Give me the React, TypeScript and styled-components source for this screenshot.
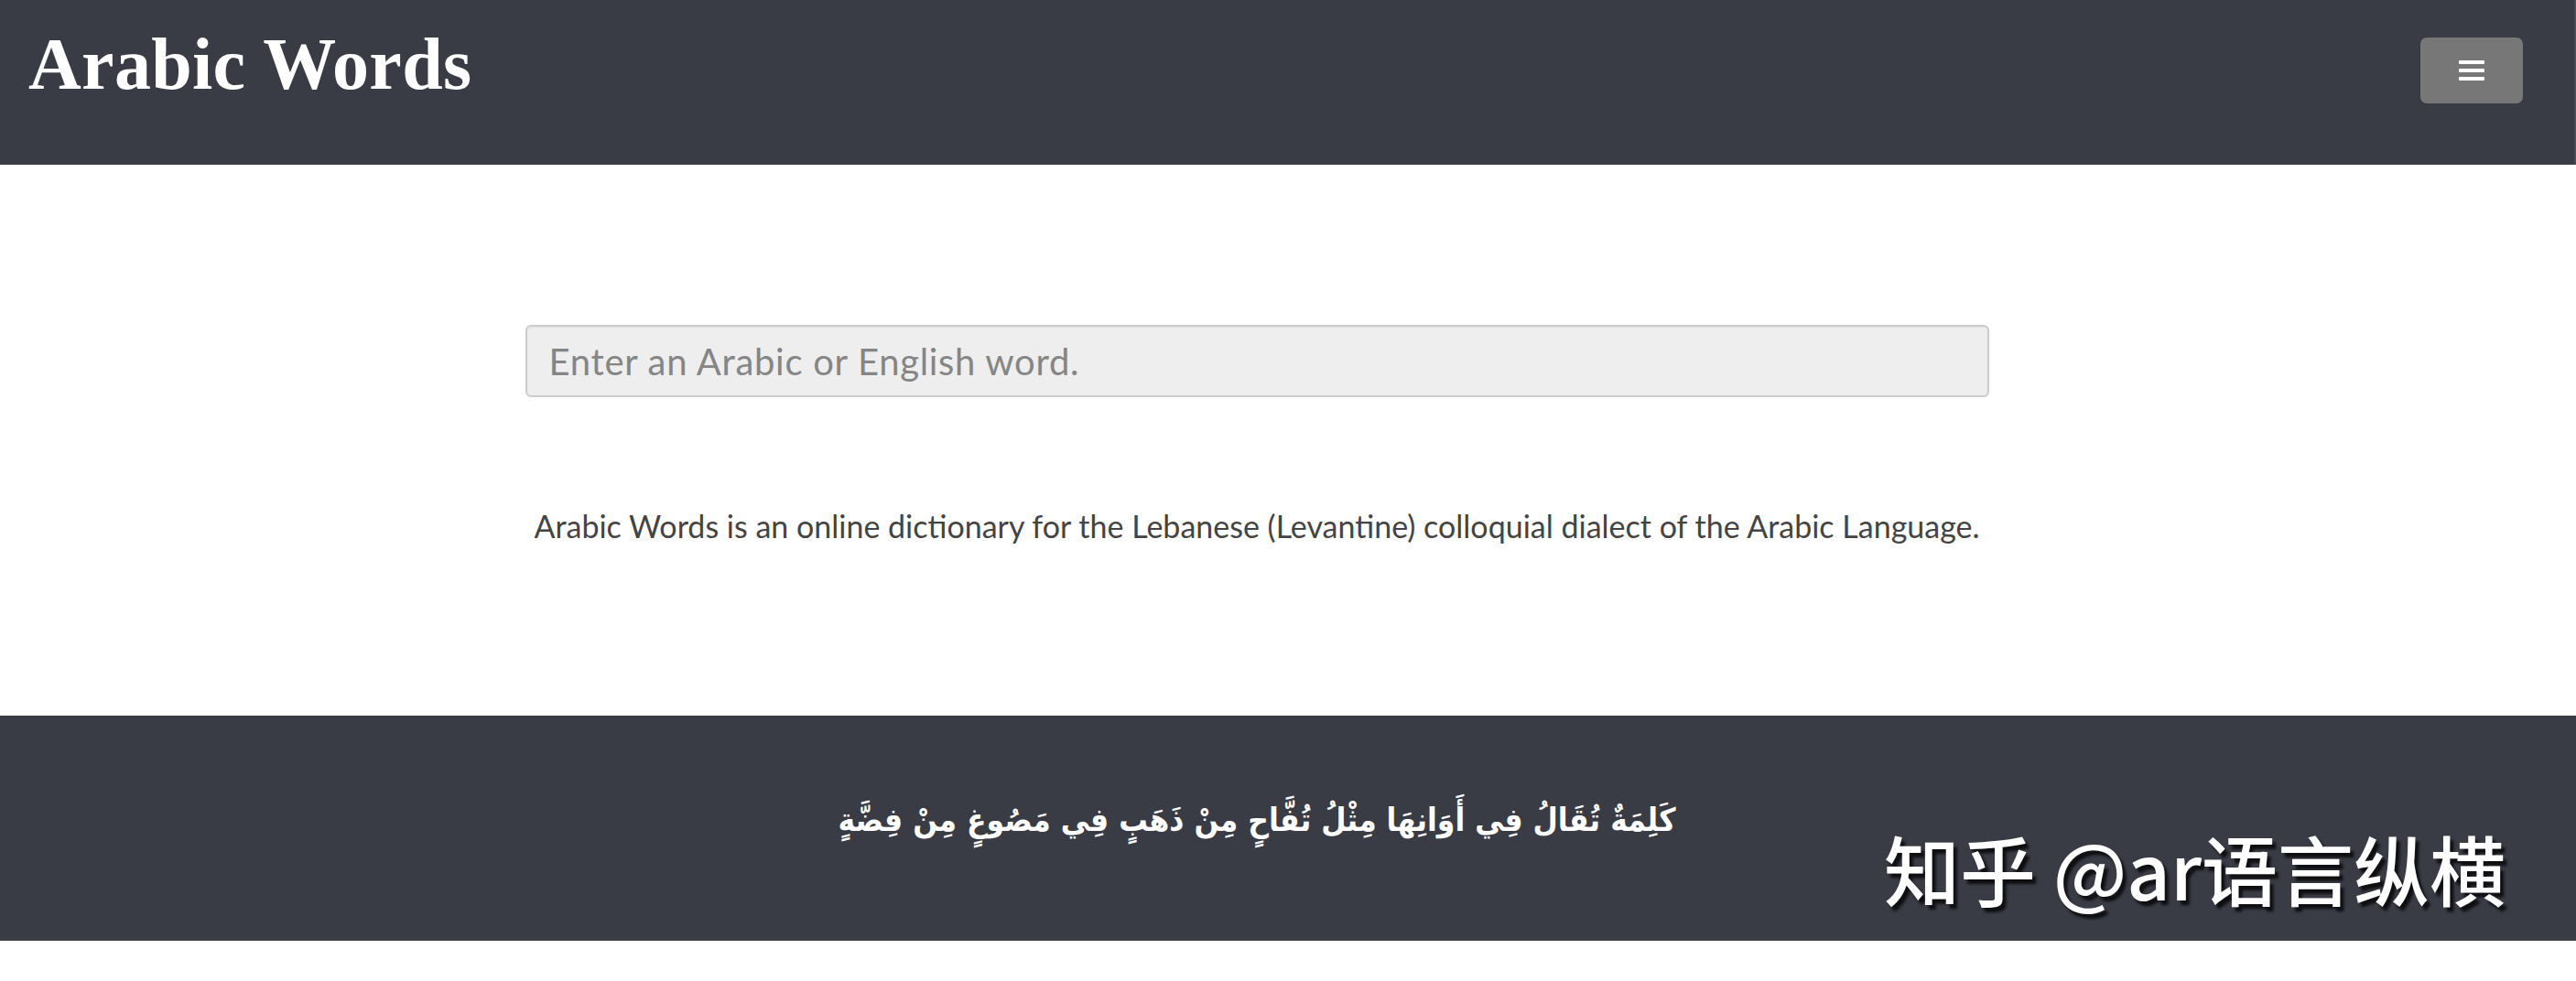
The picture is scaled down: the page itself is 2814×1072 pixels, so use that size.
import React from 'react';
import styled, { createGlobalStyle } from 'styled-components';

const GlobalStyle = createGlobalStyle`
  html, body {
    margin: 0;
    padding: 0;
    background: #ffffff;
  }
  body {
    font-family: Lato, "Open Sans", sans-serif;
  }
`;

const Page = styled.div`
  width: 2814px;
`;

const Header = styled.header`
  height: 180px;
  box-sizing: border-box;
  padding: 0 56px 0 31px;
  background: #393b45;
  border-right: 2px solid #4a4c55;
  display: flex;
  align-items: flex-start;
  justify-content: space-between;
`;

const Brand = styled.a`
  padding-top: 30px;
  font-family: "Liberation Serif", "DejaVu Serif", serif;
  font-weight: 700;
  font-size: 80px;
  line-height: 80px;
  color: #ffffff;
  text-decoration: none;
  letter-spacing: 0.3px;
`;

const MenuButton = styled.button`
  margin-top: 41px;
  width: 112px;
  height: 72px;
  border: 0;
  border-radius: 7px;
  background: #777777;
  display: flex;
  flex-direction: column;
  align-items: center;
  justify-content: center;
  gap: 5px;
  cursor: pointer;
`;

const Bar = styled.span`
  display: block;
  width: 28px;
  height: 4px;
  background: #ffffff;
  border-radius: 1px;
`;

const Main = styled.main`
  height: 602px;
  background: #ffffff;
`;

// content column is centred on x = 1373, not the window centre
const Column = styled.div<{ $width: number }>`
  width: ${(p) => p.$width + 'px'};
  display: flex;
  flex-direction: column;
  align-items: center;
`;

const SearchInput = styled.input`
  margin-top: 175px;
  width: 1599px;
  height: 79px;
  box-sizing: border-box;
  padding: 0 24px;
  border: 2px solid #cccccc;
  border-radius: 6px;
  background: #eeeeee;
  box-shadow: inset 0 1px 2px rgba(0, 0, 0, 0.06);
  font-family: Lato, "Open Sans", sans-serif;
  font-size: 40px;
  letter-spacing: 0.7px;
  color: #555;
  outline: none;
  &::placeholder {
    color: #858585;
  }
`;

const Intro = styled.p`
  margin: 120px 0 0;
  font-size: 34px;
  line-height: 42px;
  color: #444444;
  text-align: center;
`;

const Footer = styled.footer`
  position: relative;
  height: 246px;
  background: #393b45;
`;

const Proverb = styled.p`
  margin: 0;
  padding-top: 86px;
  font-family: "DejaVu Sans Condensed", "DejaVu Sans", sans-serif;
  font-stretch: condensed;
  font-weight: 700;
  font-size: 35px;
  line-height: 56px;
  color: #ffffff;
  text-align: center;
`;

const Watermark = styled.div`
  position: absolute;
  right: 77px;
  top: 125px;
  font-family: "Noto Sans CJK SC", "Noto Sans", sans-serif;
  font-weight: 500;
  font-size: 83px;
  line-height: 83px;
  color: #ffffff;
  text-shadow: 4px 5px 3px rgba(0, 0, 0, 0.75);
  white-space: nowrap;
`;

export default function App() {
  const columnWidth = 2746;
  return (
    <Page>
      <GlobalStyle />
      <Header>
        <Brand href="#">Arabic Words</Brand>
        <MenuButton aria-label="menu">
          <Bar />
          <Bar />
          <Bar />
        </MenuButton>
      </Header>
      <Main>
        <Column $width={columnWidth}>
          <SearchInput type="text" placeholder="Enter an Arabic or English word." />
          <Intro>
            Arabic Words is an online dictionary for the Lebanese (Levantine) colloquial dialect of the Arabic Language.
          </Intro>
        </Column>
      </Main>
      <Footer>
        <Column $width={columnWidth}>
          <Proverb dir="rtl">
            كَلِمَةٌ تُقَالُ فِي أَوَانِهَا مِثْلُ تُفَّاحٍ مِنْ ذَهَبٍ فِي مَصُوغٍ مِنْ فِضَّةٍ
          </Proverb>
        </Column>
        <Watermark>知乎 @ar语言纵横</Watermark>
      </Footer>
    </Page>
  );
}
